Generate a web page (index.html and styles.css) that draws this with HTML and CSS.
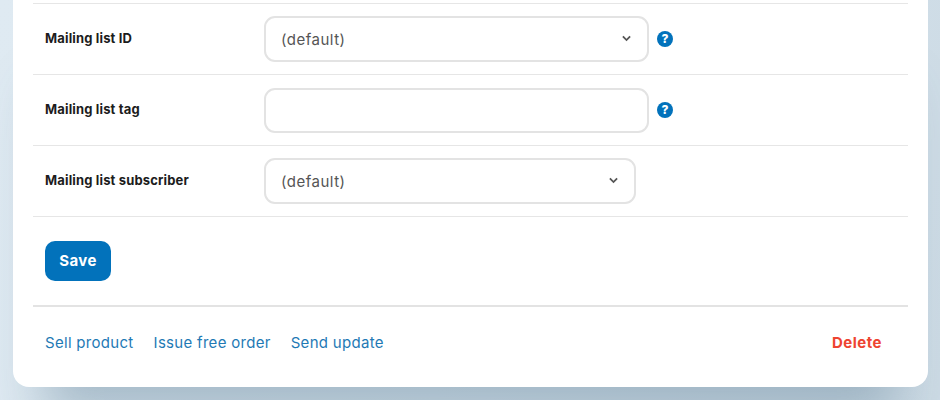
FILE: index.html
```html
<!DOCTYPE html>
<html lang="en">
<head>
    <meta charset="UTF-8">
    <title>Edit product</title>
    <link rel="stylesheet" href="styles.css">
</head>
<body>
    <div class="card">
        <form class="settings">
            <div class="form-row">
                <label class="form-label" for="list_id">Mailing list ID</label>
                <div class="select-wrap">
                    <select class="field" id="list_id"><option>(default)</option></select>
                    <svg class="chevron" viewBox="0 0 10 7" width="10" height="7"><path d="M1 1.2 5 5.2 9 1.2" fill="none" stroke="#555" stroke-width="2"/></svg>
                </div>
                <span class="help">?</span>
            </div>
            <div class="form-row">
                <label class="form-label" for="list_tag">Mailing list tag</label>
                <input class="field" type="text" id="list_tag">
                <span class="help">?</span>
            </div>
            <div class="form-row">
                <label class="form-label" for="subscriber">Mailing list subscriber</label>
                <div class="select-wrap select-short">
                    <select class="field" id="subscriber"><option>(default)</option></select>
                    <svg class="chevron" viewBox="0 0 10 7" width="10" height="7"><path d="M1 1.2 5 5.2 9 1.2" fill="none" stroke="#555" stroke-width="2"/></svg>
                </div>
            </div>
            <div class="form-actions">
                <button class="save-btn" type="button">Save</button>
            </div>
        </form>
        <div class="card-footer">
            <a href="#">Sell product</a>
            <a href="#">Issue free order</a>
            <a href="#">Send update</a>
            <a class="delete-link" href="#">Delete</a>
        </div>
    </div>
</body>
</html>
```

FILE: styles.css
```css
html, body {
    height: 100%;
}
body {
    margin: 0;
    box-sizing: border-box;
    height: 400px;
    overflow: hidden;
    padding: 0 12px 13px 13px;
    font-family: Inter, Arial, sans-serif;
    background: linear-gradient(100deg, #dfeaf2 0%, #d8e5ee 50%, #cddbe5 100%);
}
.card {
    height: 100%;
    box-sizing: border-box;
    padding: 3px 20px 0;
    background: #ffffff;
    border-radius: 0 0 16px 16px;
    box-shadow: 0 60px 50px -30px rgba(70, 105, 130, 0.36);
}
.form-row {
    display: flex;
    align-items: center;
    height: 70px;
    padding-left: 12px;
    border-top: 1px solid #e6e6e6;
}
.form-label {
    width: 219px;
    flex-shrink: 0;
    margin-top: -3px;
    font-size: 13px;
    font-weight: 700;
    letter-spacing: 0.15px;
    color: #1c1c1c;
}
.select-wrap {
    position: relative;
    width: 385px;
}
.select-short {
    width: 372px;
}
.field {
    display: block;
    box-sizing: border-box;
    width: 385px;
    height: 46px;
    padding: 0 15px;
    border: 2px solid #e3e3e3;
    border-radius: 11px;
    background: #ffffff;
    font-family: inherit;
    font-size: 15px;
    letter-spacing: 0.5px;
    color: #555555;
    appearance: none;
}
input.field {
    height: 45px;
}
.select-wrap .field {
    width: 100%;
}
.chevron {
    position: absolute;
    top: 19px;
    right: 18px;
    width: 9px;
}
.help {
    width: 16px;
    height: 16px;
    margin-left: 8px;
    border-radius: 50%;
    background: #0272bb;
    color: #ffffff;
    font-size: 12px;
    font-weight: 800;
    line-height: 16px;
    text-align: center;
}
.form-actions {
    padding: 24px 12px;
    border-top: 1px solid #e6e6e6;
    border-bottom: 2px solid #e3e3e3;
}
.save-btn {
    display: block;
    width: 66px;
    height: 40px;
    padding-bottom: 3px;
    border: none;
    border-radius: 10px;
    background: #0272bb;
    color: #ffffff;
    font-family: inherit;
    font-size: 15px;
    font-weight: 700;
    letter-spacing: 0.4px;
}
.card-footer {
    display: flex;
    gap: 20px;
    padding: 26px 26px 0 12px;
    font-size: 15px;
    letter-spacing: 0.3px;
}
.card-footer a {
    color: #1f7ab5;
    text-decoration: none;
}
.card-footer .delete-link {
    margin-left: auto;
    color: #ee4431;
    font-weight: 700;
    letter-spacing: 0.5px;
}
```
